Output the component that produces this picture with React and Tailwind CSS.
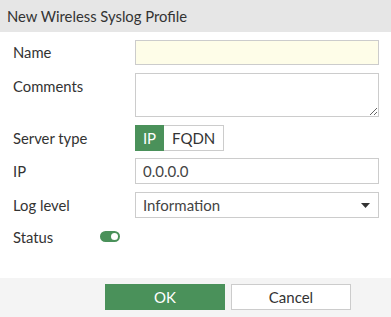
export default function App() {
  const font = { fontFamily: "Lato, 'Open Sans', sans-serif" };
  return (
    <div className="w-[391px] h-[317px] bg-white flex flex-col text-[14.8px] text-[#333]" style={font}>
      <div className="h-[32px] bg-[#e6e6e6] flex items-center px-[7px] text-[14.8px] text-[#333] shrink-0">
        New Wireless Syslog Profile
      </div>
      <div className="flex-1 flex flex-col pt-[8px] pl-[13px] pr-[12px] gap-[8px]">
        <div className="flex items-center h-[25px]">
          <div className="w-[122px]">Name</div>
          <div className="flex-1 h-[25px] border border-[#cccccc] bg-[#fefde8]"></div>
        </div>
        <div className="flex h-[44px]">
          <div className="w-[122px] pt-[4px] leading-[18px]">Comments</div>
          <textarea className="flex-1 h-[44px] border border-[#cccccc] bg-white outline-none resize-y" />
        </div>
        <div className="flex items-center h-[26px]">
          <div className="w-[122px]">Server type</div>
          <div className="flex h-[26px] border border-[#cccccc]">
            <div className="w-[29px] bg-[#4a915a] text-white flex items-center justify-center -ml-px -mt-px h-[26px] text-[15px]">IP</div>
            <div className="px-[8px] flex items-center text-[15px] text-[#333]">FQDN</div>
          </div>
        </div>
        <div className="flex items-center h-[26px] -mt-px">
          <div className="w-[122px]">IP</div>
          <div className="flex-1 h-[26px] border border-[#cccccc] flex items-center px-[7px] text-[15px] text-[#444]">0.0.0.0</div>
        </div>
        <div className="flex items-center h-[26px]">
          <div className="w-[122px]">Log level</div>
          <div className="flex-1 h-[26px] border border-[#cccccc] flex items-center justify-between pl-[7px] pr-[8px] text-[15px] text-[#444]">
            <span>Information</span>
            <svg width="9" height="5" viewBox="0 0 9 5"><path d="M0 0 L9 0 L4.5 5 Z" fill="#333" /></svg>
          </div>
        </div>
        <div className="flex items-center h-[22px]">
          <div className="w-[87px]">Status</div>
          <div className="w-[20px] h-[11px] rounded-full bg-[#4a915a] flex items-center justify-end pr-[2px] -mt-[2px]">
            <div className="w-[7px] h-[7px] rounded-full bg-white"></div>
          </div>
        </div>
      </div>
      <div className="h-[39px] bg-[#f4f4f4] flex items-start pt-[6px] pl-[105px] gap-[6px] shrink-0">
        <button className="w-[120px] h-[26px] bg-[#4a915a] text-white text-[15px] flex items-center justify-center">OK</button>
        <button className="w-[120px] h-[26px] bg-white border border-[#cccccc] text-[#333] text-[15px] flex items-center justify-center">Cancel</button>
      </div>
    </div>
  );
}
